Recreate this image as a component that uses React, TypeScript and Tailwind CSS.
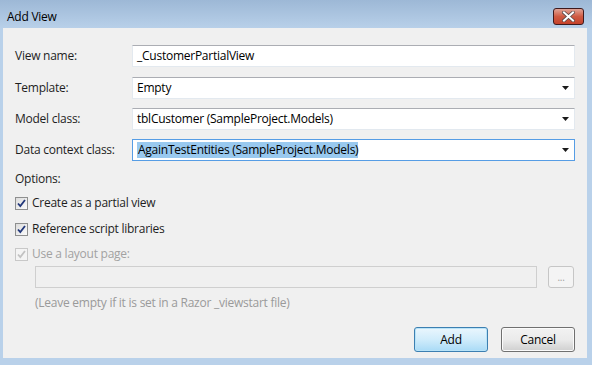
import React from "react";

const font = { fontFamily: '"Open Sans", "Noto Sans", sans-serif' };

function Arrow() {
  return (
    <svg width="7" height="4" viewBox="0 0 7 4" className="shrink-0" aria-hidden>
      <path d="M0 0h7L3.5 4z" fill="#1a1a1a" />
    </svg>
  );
}

function Field({ children, focused }: { children: React.ReactNode; focused?: boolean }) {
  return (
    <div
      className={
        "flex h-[22px] w-[443px] items-center justify-between border bg-white pl-[4px] pr-[5px] " +
        (focused ? "border-[#569de5]" : "border-[#e3e9ef] border-t-[#abadb3]")
      }
    >
      {children}
    </div>
  );
}

function Row({ label, children, className }: { label: string; children: React.ReactNode; className?: string }) {
  return (
    <div className={"flex items-center " + (className ?? "")}>
      <span className="w-[117px] shrink-0 text-[12px] text-[#1e1e1e]">{label}</span>
      {children}
    </div>
  );
}

function Check({ label, disabled, className }: { label: string; disabled?: boolean; className?: string }) {
  return (
    <div className={"flex h-[16px] items-center " + (className ?? "")}>
      <span
        className={
          "flex h-[13px] w-[13px] items-center justify-center border " +
          (disabled ? "border-[#c8c8c8] bg-[#f4f4f4]" : "border-[#8e8f8f] bg-gradient-to-br from-[#dcdcdc] to-[#fbfbfb]")
        }
      >
        <svg width="9" height="9" viewBox="0 0 9 9" aria-hidden>
          <path
            d="M1 4.5l2.3 2.6L8 1"
            fill="none"
            stroke={disabled ? "#c2c2c2" : "#21377a"}
            strokeWidth="1.8"
          />
        </svg>
      </span>
      <span className={"ml-[4px] text-[12px] " + (disabled ? "text-[#a2a2a2]" : "text-[#1e1e1e]")}>{label}</span>
    </div>
  );
}

export default function App() {
  return (
    <div className="h-[365px] w-[592px] overflow-hidden bg-[#b9d1ea] tracking-[-0.25px]" style={font}>
      <div className="flex h-[28px] items-start justify-between bg-gradient-to-b from-[#9db8d6] to-[#b8d0e9] pl-[7px] pr-[8px]">
        <span className="mt-[9px] text-[12px] leading-[16px] text-black">Add View</span>
        <div className="mt-[8px] flex h-[17px] w-[31px] items-center justify-center rounded-[3px] border border-[#3e1a1d] bg-gradient-to-b from-[#e0a396] via-[#cf5a42] to-[#c4412a]">
          <svg width="13" height="11" viewBox="0 0 13 11" aria-hidden>
            <path d="M2 1.5l9 8M11 1.5l-9 8" stroke="#5a4a4a" strokeWidth="3.6" strokeLinecap="square" />
            <path d="M2 1.5l9 8M11 1.5l-9 8" stroke="#ffffff" strokeWidth="2" strokeLinecap="square" />
          </svg>
        </div>
      </div>

      <div className="ml-[3px] mr-[5px] flex h-[330px] flex-col bg-[#f0f0f0] pl-[12px] pr-[12px] pt-[17px]">
        <Row label="View name:">
          <Field>
            <span className="text-[12px] text-black">_CustomerPartialView</span>
          </Field>
        </Row>
        <Row label="Template:" className="mt-[10px]">
          <Field>
            <span className="text-[12px] text-black">Empty</span>
            <Arrow />
          </Field>
        </Row>
        <Row label="Model class:" className="mt-[9px]">
          <Field>
            <span className="text-[12px] text-black">tblCustomer (SampleProject.Models)</span>
            <Arrow />
          </Field>
        </Row>
        <Row label="Data context class:" className="mt-[9px]">
          <Field focused>
            <span className="bg-[#99c9ef] pl-[1px] text-[12px] leading-[16px] text-black">
              AgainTestEntities (SampleProject.Models)
            </span>
            <Arrow />
          </Field>
        </Row>

        <span className="mt-[10px] h-[16px] text-[12px] leading-[16px] text-[#1e1e1e]">Options:</span>
        <Check label="Create as a partial view" className="mt-[8px]" />
        <Check label="Reference script libraries" className="mt-[10px]" />
        <Check label="Use a layout page:" disabled className="mt-[9px]" />

        <div className="ml-[20px] mt-[4px] flex items-center gap-[11px]">
          <div className="h-[22px] w-[502px] border border-[#cfcfcf] bg-[#f0f0f0]" />
          <div className="flex h-[22px] w-[26px] items-center justify-center rounded-[3px] border border-[#c6c6c6] bg-[#f4f4f4] text-[10px] leading-none text-[#a0a0a0]">
            ...
          </div>
        </div>
        <span className="ml-[20px] mt-[7px] h-[16px] text-[12px] leading-[16px] text-[#9a9a9a]">
          (Leave empty if it is set in a Razor _viewstart file)
        </span>

        <div className="mt-[16px] flex justify-end gap-[13px]">
          <button className="h-[25px] w-[74px] rounded-[3px] border border-[#3c7fb1] bg-gradient-to-b from-[#eaf6fd] via-[#d0ecfb] to-[#a9dbf6] text-[12px] text-black shadow-[inset_0_0_0_1px_#b8e3f8]">
            Add
          </button>
          <button className="h-[25px] w-[74px] rounded-[3px] border border-[#707070] bg-gradient-to-b from-[#f2f2f2] via-[#ebebeb] to-[#cfcfcf] text-[12px] text-black shadow-[inset_0_0_0_1px_#fbfbfb]">
            Cancel
          </button>
        </div>
      </div>
    </div>
  );
}
